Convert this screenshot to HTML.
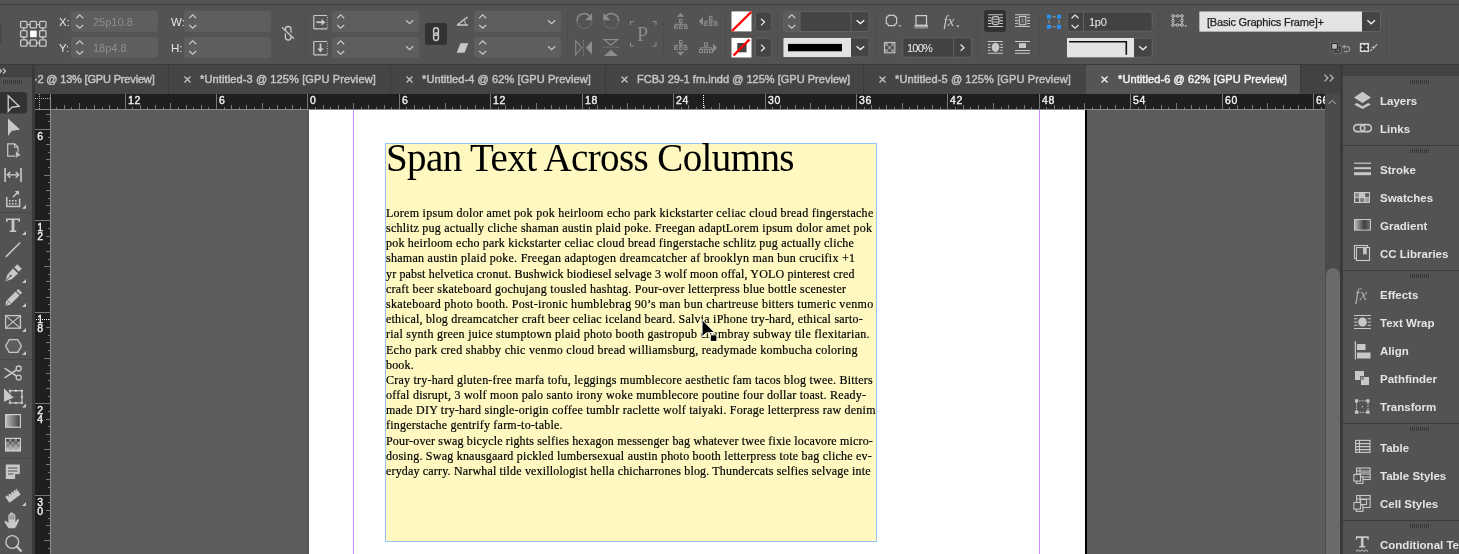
<!DOCTYPE html>
<html><head><meta charset="utf-8">
<style>
*{margin:0;padding:0;box-sizing:border-box}
html,body{width:1459px;height:554px;overflow:hidden;background:#535353;font-family:"Liberation Sans",sans-serif;position:relative}
.a{position:absolute}
div,svg{will-change:transform}
svg.a{overflow:visible}
.inp{position:absolute;background:#5e5e5e;border-radius:3px}
.lbl{position:absolute;color:#e4e4e4;font-size:11.5px;line-height:12px}
.val{position:absolute;color:#8e8e8e;font-size:11px;line-height:12px}
.tab{position:absolute;top:65px;height:29px;background:#454545;color:#c4c4c4;font-size:11px;line-height:12px;white-space:nowrap;overflow:hidden}
.tab .t{position:absolute;top:8.4px;-webkit-text-stroke:0.45px #c4c4c4}
.tab.act{background:#555555;color:#f4f4f4}
.tab.act .t{-webkit-text-stroke:0.3px #f4f4f4}
.tdiv{position:absolute;top:65px;width:1px;height:29px;background:#3b3b3b}
.ritem{position:absolute;left:1380px;color:#e4e4e4;font-size:11.5px;font-weight:bold;line-height:14px;white-space:nowrap}
.rsep{position:absolute;left:1343px;width:116px;height:1px;background:#3a3a3a}
.bl{position:absolute;left:386px;font-family:"Liberation Serif",serif;font-size:12px;line-height:15px;color:#000;white-space:nowrap;-webkit-text-stroke:0.2px #000}
#title{left:386px;top:136px;font-family:"Liberation Serif",serif;font-size:39px;line-height:44px;letter-spacing:-0.6px;color:#000;white-space:nowrap;-webkit-text-stroke:0.05px #000}
.guide{position:absolute;width:1px;background:#d08aff}
</style></head><body>
<!-- top strip -->
<div class="a" style="left:0;top:4px;width:1459px;height:1px;background:#3c3c3c"></div>

<!-- X/Y/W/H -->
<div class="lbl" style="left:59px;top:16px">X:</div>
<div class="lbl" style="left:59px;top:42px">Y:</div>
<div class="inp" style="left:71px;top:11px;width:87px;height:21px"></div>
<div class="inp" style="left:71px;top:37px;width:87px;height:21px"></div>
<div class="val" style="left:93px;top:16px">25p10.8</div>
<div class="val" style="left:93px;top:42px">18p4.8</div>
<div class="lbl" style="left:171px;top:16px">W:</div>
<div class="lbl" style="left:171px;top:42px">H:</div>
<div class="inp" style="left:184px;top:11px;width:87px;height:21px"></div>
<div class="inp" style="left:184px;top:37px;width:87px;height:21px"></div>
<svg class="a" style="left:0;top:0" width="1459" height="64" viewBox="0 0 1459 64">
<defs>
<linearGradient id="dsh" x1="0" x2="0" y1="0" y2="1"><stop offset="0" stop-color="#d0d0d0"/><stop offset="1" stop-color="#535353"/></linearGradient>
</defs>
<!-- left grip -->
<g fill="#3e3e3e"><rect x="0" y="25" width="2" height="1"/><rect x="0" y="27" width="2" height="1"/><rect x="0" y="29" width="2" height="1"/><rect x="0" y="31" width="2" height="1"/><rect x="0" y="33" width="2" height="1"/><rect x="0" y="35" width="2" height="1"/><rect x="0" y="37" width="2" height="1"/><rect x="0" y="39" width="2" height="1"/><rect x="0" y="41" width="2" height="1"/><rect x="0" y="43" width="2" height="1"/></g>
<!-- reference point -->
<g fill="none" stroke="#c8c8c8" stroke-width="1.3">
<rect x="20.6" y="21.4" width="6.4" height="6.4" rx="1"/><rect x="30.1" y="21.4" width="6.4" height="6.4" rx="1"/><rect x="39.6" y="21.4" width="6.4" height="6.4" rx="1"/>
<rect x="20.6" y="30.6" width="6.4" height="6.4" rx="1"/><rect x="39.6" y="30.6" width="6.4" height="6.4" rx="1"/>
<rect x="20.6" y="39.8" width="6.4" height="6.4" rx="1"/><rect x="30.1" y="39.8" width="6.4" height="6.4" rx="1"/><rect x="39.6" y="39.8" width="6.4" height="6.4" rx="1"/>
<path d="M27 24.6h3.1M36.5 24.6h3.1M27 43h3.1M36.5 43h3.1M23.8 27.8v2.8M42.8 27.8v2.8M23.8 37v2.8M42.8 37v2.8"/>
</g>
<rect x="30.1" y="30.6" width="6.6" height="6.6" fill="#ffffff"/>
<!-- spinners in X Y W H -->
<g fill="none" stroke="#c8c8c8" stroke-width="1.2">
<path d="M76.2 18.2l3.5-3.3l3.5 3.3M76.2 25l3.5 3.3l3.5-3.3"/>
<path d="M76.2 44.2l3.5-3.3l3.5 3.3M76.2 51l3.5 3.3l3.5-3.3"/>
<path d="M189.2 18.2l3.5-3.3l3.5 3.3M189.2 25l3.5 3.3l3.5-3.3"/>
<path d="M189.2 44.2l3.5-3.3l3.5 3.3M189.2 51l3.5 3.3l3.5-3.3"/>
</g>
<!-- broken link -->
<path d="M285.4 30.5v-1.2a2.8 2.8 0 0 1 5.6 0v3.5M285.4 33.5v3.8a2.8 2.8 0 0 0 5.6 0v-1.5" fill="none" stroke="#c8c8c8" stroke-width="1.3"/>
<path d="M282 27.3L294 38.7" stroke="#c8c8c8" stroke-width="1.3"/>
<!-- separators -->
<g stroke="#4b4b4b" stroke-width="1" stroke-dasharray="3 1">
<path d="M305.5 12v45M567.5 12v45M663.5 12v45M725.5 12v45M777.5 12v45M875.5 12v45M977.5 12v45M1039.5 12v45M1158.5 12v45M1386.5 12v45"/>
</g>
<!-- scale X icon -->
<path d="M313.8 15.5v13.3M313.8 15.5h13.4M313.8 28.8h13.4" stroke="#c8c8c8" stroke-width="1.2" fill="none"/>
<path d="M327.3 17v11.5" stroke="#c8c8c8" stroke-width="1" stroke-dasharray="1 1.5"/>
<path d="M316.5 22.2h6.5" stroke="#c8c8c8" stroke-width="1.8"/>
<path d="M321.5 19l4 3.2l-4 3.2z" fill="#c8c8c8"/>
<!-- scale Y icon -->
<path d="M313.8 41.5v13.3M313.8 41.5h13.4M313.8 54.8h13.4" stroke="#c8c8c8" stroke-width="1.2" fill="none"/>
<path d="M327.3 43v11.5" stroke="#c8c8c8" stroke-width="1" stroke-dasharray="1 1.5"/>
<path d="M320.5 43.5v6" stroke="#c8c8c8" stroke-width="1.8"/>
<path d="M317.3 48.5l3.2 4l3.2-4z" fill="#c8c8c8"/>
<!-- scale inputs -->
<rect x="332" y="11" width="87" height="21" rx="3" fill="#5e5e5e"/>
<rect x="332" y="37" width="87" height="21" rx="3" fill="#5e5e5e"/>
<g fill="none" stroke="#c8c8c8" stroke-width="1.2">
<path d="M337.2 18.2l3.5-3.3l3.5 3.3M337.2 25l3.5 3.3l3.5-3.3"/>
<path d="M337.2 44.2l3.5-3.3l3.5 3.3M337.2 51l3.5 3.3l3.5-3.3"/>
<path d="M406 20.3l3.6 3.3l3.6-3.3M406 46.3l3.6 3.3l3.6-3.3"/>
</g>
<!-- constrain link button -->
<rect x="425" y="23" width="22" height="21.7" rx="2" fill="#323232"/>
<rect x="433.6" y="27.8" width="4.8" height="7.4" rx="2.4" fill="none" stroke="#c8c8c8" stroke-width="1.5"/><rect x="433.6" y="32.8" width="4.8" height="7.6" rx="2.4" fill="none" stroke="#c8c8c8" stroke-width="1.5"/><path d="M434 33.5L436.5 31" stroke="#323232" stroke-width="0.8"/>
<!-- angle icon -->
<path d="M457 25h11M457.2 25L467.5 17" stroke="#c8c8c8" stroke-width="1.5" fill="none"/>
<path d="M463.7 20a5.5 5.5 0 0 1 1.7 4.5" stroke="#c8c8c8" stroke-width="1" fill="none"/>
<!-- shear icon -->
<path d="M460.5 43.2h7.8l-3.8 9.5h-7.8z" fill="#c8c8c8"/>
<!-- angle inputs -->
<rect x="474" y="11" width="87" height="21" rx="3" fill="#5e5e5e"/>
<rect x="474" y="37" width="87" height="21" rx="3" fill="#5e5e5e"/>
<g fill="none" stroke="#c8c8c8" stroke-width="1.2">
<path d="M479.2 18.2l3.5-3.3l3.5 3.3M479.2 25l3.5 3.3l3.5-3.3"/>
<path d="M479.2 44.2l3.5-3.3l3.5 3.3M479.2 51l3.5 3.3l3.5-3.3"/>
<path d="M548 20.3l3.6 3.3l3.6-3.3M548 46.3l3.6 3.3l3.6-3.3"/>
</g>
<!-- rotate icons (disabled) -->
<g fill="none" stroke="#8c8c8c" stroke-width="1.5">
<path d="M577 21a7.3 7.3 0 0 1 13-4.6"/>
<path d="M618.6 21a7.3 7.3 0 0 0 -13-4.6"/>
</g>
<g fill="none" stroke="#8c8c8c" stroke-width="1.1" stroke-dasharray="1 1.4">
<path d="M577 21a7.3 7.3 0 0 0 14.6 0"/>
<path d="M604 21a7.3 7.3 0 0 0 14.6 0"/>
</g>
<path d="M592.2 13v7.3h-7z" fill="#8c8c8c"/>
<path d="M603.4 13v7.3h7z" fill="#8c8c8c"/>
<!-- flip icons -->
<path d="M575.7 41v13.5l6-6.75z" fill="none" stroke="#8c8c8c" stroke-width="1.1"/>
<path d="M592 41v13.5l-6.3-6.75z" fill="#8c8c8c"/>
<path d="M583.5 40v16" stroke="#8c8c8c" stroke-width="1" stroke-dasharray="1 1.2"/>
<path d="M604.2 39.6h13.5l-6.75 5.6z" fill="none" stroke="#8c8c8c" stroke-width="1.1"/>
<path d="M604 56h14l-7-6.3z" fill="#8c8c8c"/>
<path d="M603 47.2h16" stroke="#8c8c8c" stroke-width="1" stroke-dasharray="1 1.2"/>
<!-- P icon -->
<path d="M630.5 25v-3.5h3.5M652.5 21.5h3.5v3.5M630.5 42.5v3.5h3.5M656 42.5v3.5h-3.5" fill="none" stroke="#8c8c8c" stroke-width="1.2"/>
<text x="637" y="41" font-family="Liberation Serif" font-size="20" fill="#8c8c8c">P</text>
<!-- select container/content/prev/next (disabled) -->
<g fill="#8c8c8c">
<path d="M677 16.8l3.6-4l3.6 4z"/>
<path d="M677 51.8l3.6 4l3.6-4z"/>
<path d="M703 17l-4.2 4.2l4.2 4.2z"/>
<path d="M713 43.5l4.2 4.3l-4.2 4.3z"/>
</g>
<g fill="none" stroke="#8c8c8c" stroke-width="1">
<rect x="679.5" y="19.5" width="2.4" height="3"/><path d="M680.7 22.5v1.8M675 26v-1.7h11.4v1.7M680.7 24.3v1.7"/><rect x="674.5" y="26" width="2.5" height="2.6"/><rect x="679.5" y="26" width="2.5" height="2.6"/><rect x="684.5" y="26" width="2.5" height="2.6"/>
<rect x="679.5" y="40.5" width="2.4" height="3"/><path d="M680.7 43.5v1.8M675 47v-1.7h11.4v1.7M680.7 45.3v1.7"/><rect x="674.5" y="47" width="2.5" height="2.6"/><rect x="679.5" y="47" width="2.5" height="2.6"/><rect x="684.5" y="47" width="2.5" height="2.6"/>
<rect x="709.5" y="16.3" width="2.4" height="3"/><path d="M710.7 19.3v1.8M705 22.8v-1.7h11.4v1.7M710.7 21.1v1.7"/><rect x="704.5" y="22.8" width="2.5" height="2.6"/><rect x="709.5" y="22.8" width="2.5" height="2.6"/><rect x="714.5" y="22.8" width="2.5" height="2.6"/>
<rect x="704.5" y="43" width="3" height="3"/><path d="M706 46v1.8M700.5 49.5v-1.7h11.5v1.7"/><rect x="699.5" y="49.5" width="3" height="3"/><rect x="704.5" y="49.5" width="3" height="3"/><rect x="709.5" y="49.5" width="3" height="3"/>
</g>
<!-- fill swatch -->
<rect x="731.5" y="11.4" width="20" height="20" fill="#ffffff"/>
<path d="M732 31L751.2 12" stroke="#ff0000" stroke-width="2.4"/>
<!-- stroke swatch -->
<rect x="731.5" y="37.9" width="20" height="19.6" fill="#ffffff"/>
<rect x="737.3" y="43" width="9.2" height="9.3" fill="#444"/>
<path d="M733.5 55.5L749.5 39.5" stroke="#ff0000" stroke-width="2.4"/>
<!-- > buttons -->
<rect x="755.5" y="11.8" width="15.8" height="19.4" rx="2.5" fill="#444444" stroke="#5f5f5f" stroke-width="1"/>
<rect x="755.5" y="38.2" width="15.8" height="19" rx="2.5" fill="#444444" stroke="#5f5f5f" stroke-width="1"/>
<path d="M761 18.8l3.5 3.3l-3.5 3.3M761 44.6l3.5 3.3l-3.5 3.3" fill="none" stroke="#e6e6e6" stroke-width="1.3"/>
<!-- stroke weight -->
<rect x="783.5" y="11.5" width="85.5" height="20" rx="2.5" fill="#444444" stroke="#626262" stroke-width="1"/>
<path d="M786 11.5h14v20h-14a2.5 2.5 0 0 1 -2.5-2.5v-15a2.5 2.5 0 0 1 2.5-2.5z" fill="#5c5c5c"/>
<path d="M800 11.5v20M851 11.5v20" stroke="#626262" stroke-width="1"/>
<path d="M788.3 18l3.5-3.3l3.5 3.3M788.3 25l3.5 3.3l3.5-3.3" fill="none" stroke="#c8c8c8" stroke-width="1.2"/>
<path d="M856.6 20.2l3.8 3.4l3.8-3.4" fill="none" stroke="#eeeeee" stroke-width="1.4"/>
<!-- stroke type -->
<rect x="783.5" y="38" width="85.5" height="19" rx="2.5" fill="#444444" stroke="#626262" stroke-width="1"/>
<rect x="783.5" y="38" width="67.5" height="19" fill="#e3e3e3"/>
<rect x="788" y="43.9" width="54" height="7.4" fill="#000000"/>
<path d="M856.6 46.2l3.8 3.4l3.8-3.4" fill="none" stroke="#eeeeee" stroke-width="1.4"/>
<!-- corner options -->
<path d="M886.3 17.3a2 2 0 0 0 2-2h6.3a2 2 0 0 0 2 2v6.3a2 2 0 0 0 -2 2h-6.3a2 2 0 0 0 -2-2z" fill="none" stroke="#c8c8c8" stroke-width="1.2"/>
<path d="M886.3 18.5a3.2 3.2 0 0 0 3.2-3.2M893.4 15.3a3.2 3.2 0 0 0 3.2 3.2M896.6 22.4a3.2 3.2 0 0 0 -3.2 3.2M889.5 25.6a3.2 3.2 0 0 0 -3.2-3.2" fill="none" stroke="#535353" stroke-width="0"/>
<path d="M898.3 25.2h3l-1.5 1.8z" fill="#c8c8c8"/>
<!-- drop shadow -->
<rect x="914.5" y="25" width="13.5" height="4.5" fill="url(#dsh)"/>
<rect x="916" y="15.6" width="10.5" height="9.6" fill="#535353" stroke="#d0d0d0" stroke-width="1.2"/>
<!-- fx -->
<text x="943.5" y="26" font-family="Liberation Serif" font-style="italic" font-size="15" fill="#c8c8c8">fx</text>
<path d="M956.3 25.6h3l-1.5 1.8z" fill="#c8c8c8"/>
<!-- opacity icon -->
<rect x="884.5" y="42.5" width="10.3" height="10.3" fill="#535353" stroke="#c8c8c8" stroke-width="1.1"/>
<g fill="#8e8e8e"><rect x="885" y="43" width="3.1" height="3.1"/><rect x="891.2" y="43" width="3.1" height="3.1"/><rect x="888.1" y="46.1" width="3.1" height="3.1"/><rect x="885" y="49.2" width="3.1" height="3.1"/><rect x="891.2" y="49.2" width="3.1" height="3.1"/></g>
<!-- opacity input -->
<rect x="902.8" y="37.8" width="68.5" height="19.4" rx="2.5" fill="#424242" stroke="#626262" stroke-width="1"/>
<path d="M953.7 37.8v19.4" stroke="#626262" stroke-width="1"/>
<path d="M960.6 44.5l3.4 3.2l-3.4 3.2" fill="none" stroke="#e6e6e6" stroke-width="1.3"/>
<!-- text wrap -->
<rect x="984" y="10" width="22" height="22" rx="3" fill="#323232"/>
<g stroke="#c8c8c8" stroke-width="1.1" fill="none">
<path d="M988 14.7h14.8M988 26.5h14.8M988 17.7h3.2M999.6 17.7h3.2M988 20.6h3.2M999.6 20.6h3.2M988 23.5h3.2M999.6 23.5h3.2"/>
<rect x="992" y="16.6" width="7" height="8" rx="2.5"/>
<path d="M992.3 19.3h6.4M992.3 22h6.4"/>
<path d="M1015 14.7h15M1015 26.5h15M1015 17.7h2.8M1027.2 17.7h2.8M1015 20.6h2.8M1027.2 20.6h2.8M1015 23.5h2.8M1027.2 23.5h2.8"/>
<rect x="1019.3" y="16.5" width="6.5" height="8.2"/>
<path d="M988 41.5h14.8M988 53.3h14.8M988 44.5h2.5M1000.3 44.5h2.5M988 47.4h2.5M1000.3 47.4h2.5M988 50.3h2.5M1000.3 50.3h2.5"/>
<path d="M1015 41.5h15M1015 50.5h15M1015 53.3h15"/>
</g>
<rect x="1021.8" y="18.5" width="1.6" height="4.2" fill="#8c8c8c"/>
<ellipse cx="995.5" cy="47.3" rx="3.8" ry="4.6" fill="#c8c8c8"/>
<rect x="1019" y="43.2" width="7" height="4.8" fill="#c8c8c8"/>
<!-- frame fitting -->
<g fill="#2b8ef0"><rect x="1047" y="14.8" width="4" height="4"/><rect x="1057" y="14.8" width="4" height="4"/><rect x="1047" y="24.8" width="4" height="4"/><rect x="1057" y="24.8" width="4" height="4"/></g>
<g fill="#9a9a9a"><rect x="1052.2" y="16.3" width="3.6" height="1"/><rect x="1052.2" y="26.3" width="3.6" height="1"/><rect x="1048.5" y="20" width="1" height="3.6"/><rect x="1058.5" y="20" width="1" height="3.6"/></g>
<rect x="1067.2" y="11.9" width="85" height="19.3" rx="2.5" fill="#424242" stroke="#626262" stroke-width="1"/>
<path d="M1083.5 11.9v19.3" stroke="#626262" stroke-width="1"/>
<path d="M1071.6 18.3l3.5-3.3l3.5 3.3M1071.6 25l3.5 3.3l3.5-3.3" fill="none" stroke="#e6e6e6" stroke-width="1.2"/>
<!-- stroke corner -->
<rect x="1067.2" y="38.2" width="85" height="19" rx="2.5" fill="#444444" stroke="#626262" stroke-width="1"/>
<rect x="1067" y="38" width="67" height="19.3" fill="#e3e3e3"/>
<path d="M1069 41.8h57.3v13" fill="none" stroke="#111" stroke-width="1.6"/>
<path d="M1139.2 46.3l3.8 3.4l3.8-3.4" fill="none" stroke="#eeeeee" stroke-width="1.4"/>
<!-- object style icon -->
<path d="M1174.6 16h6.8M1174.6 25h6.8M1173 17.6v6.8M1182 17.6v6.8" stroke="#c8c8c8" stroke-width="1" fill="none"/>
<g fill="#535353" stroke="#c8c8c8" stroke-width="1"><circle cx="1173" cy="16" r="1.3"/><circle cx="1177.5" cy="16" r="1.3"/><circle cx="1182" cy="16" r="1.3"/><circle cx="1173" cy="20.5" r="1.3"/><circle cx="1182" cy="20.5" r="1.3"/><circle cx="1173" cy="25" r="1.3"/><circle cx="1177.5" cy="25" r="1.3"/><circle cx="1182" cy="25" r="1.3"/></g>
<path d="M1184.3 25.6h2.8l-1.4 1.7z" fill="#c8c8c8"/>
<!-- object style dropdown -->
<rect x="1199.5" y="11.5" width="181" height="20" rx="2.5" fill="#444444" stroke="#626262" stroke-width="1"/>
<rect x="1199.4" y="11.5" width="162.6" height="20.1" fill="#e3e3e3"/>
<path d="M1367.4 20.3l3.8 3.4l3.8-3.4" fill="none" stroke="#eeeeee" stroke-width="1.4"/>
<!-- clear overrides icon -->
<rect x="1333.6" y="45.6" width="7.6" height="7.6" fill="none" stroke="#6a6a6a" stroke-width="1"/>
<rect x="1334.5" y="46.5" width="5.8" height="5.8" fill="#2e2e2e"/>
<rect x="1330.8" y="42.7" width="7.4" height="7.4" fill="none" stroke="#6a6a6a" stroke-width="1"/>
<rect x="1331.6" y="43.5" width="5.8" height="5.8" fill="#b8b8b8" stroke="#2a2a2a" stroke-width="1.1"/>
<path d="M1336.8 50.9h2v-2.2" fill="none" stroke="#8a8a8a" stroke-width="0.9"/>
<path d="M1342.6 46.6h4.6a2.5 2.5 0 0 1 0 5h-3.2" fill="none" stroke="#9a9a9a" stroke-width="1.1"/>
<path d="M1345 44.2l-2.8 2.4l2.8 2.4z" fill="#9a9a9a"/>
<!-- break link to style -->
<rect x="1359.8" y="42.9" width="9.2" height="9.1" fill="#d8d8d8"/>
<g fill="#3a3a3a"><circle cx="1362.6" cy="45.7" r="1.5"/><circle cx="1366.2" cy="45.7" r="1.5"/><circle cx="1362.6" cy="49.2" r="1.5"/><circle cx="1366.2" cy="49.2" r="1.5"/><rect x="1362.4" y="45.5" width="4" height="3.9"/></g>
<path d="M1370.2 51.2l2-2M1374.8 46.6l2.4-2.4" stroke="#c8c8c8" stroke-width="1.1"/>
<path d="M1373.5 45.2l0.5 1.8l1.8 0.5l-1.8 0.5l-0.5 1.8l-0.5-1.8l-1.8-0.5l1.8-0.5z" fill="#d0d0d0"/>
</svg>
<div class="a" style="left:906.5px;top:42px;color:#f0f0f0;font-size:11px;line-height:12px;letter-spacing:-0.8px">100%</div>
<div class="a" style="left:1088.5px;top:16px;color:#f0f0f0;font-size:11px;line-height:12px;letter-spacing:-0.3px">1p0</div>
<div class="a" style="left:1207px;top:16px;color:#1e1e1e;font-size:11px;line-height:12px;white-space:nowrap;letter-spacing:-0.2px;-webkit-text-stroke:0.25px #1e1e1e">[Basic Graphics Frame]+</div>


<!-- left tools panel -->
<div class="a" style="left:0;top:65px;width:32px;height:11px;background:#434343"></div>
<div class="a" style="left:32px;top:64px;width:3px;height:490px;background:#3a3a3a"></div>
<svg class="a" style="left:0;top:0" width="32" height="554" viewBox="0 0 32 554">
<!-- header chevrons -->
<path d="M-1 68.5l2.5 2.5-2.5 2.5M3 68.5l2.5 2.5-2.5 2.5" stroke="#c8c8c8" stroke-width="1.2" fill="none"/>
<rect x="0" y="76" width="32" height="1" fill="#3e3e3e"/>
<g fill="#383838">
<rect x="3" y="80" width="1" height="4"/><rect x="5" y="80" width="1" height="4"/><rect x="7" y="80" width="1" height="4"/><rect x="9" y="80" width="1" height="4"/><rect x="11" y="80" width="1" height="4"/><rect x="13" y="80" width="1" height="4"/><rect x="15" y="80" width="1" height="4"/><rect x="17" y="80" width="1" height="4"/><rect x="19" y="80" width="1" height="4"/><rect x="21" y="80" width="1" height="4"/>
</g>
<!-- active selection bg -->
<path d="M0 92h24a3 3 0 0 1 3 3v15.5a3 3 0 0 1 -3 3H0z" fill="#323232"/>
<!-- selection tool -->
<path d="M8.2 95.8L19.2 106.2L11.6 107.4L8.2 111.4Z" fill="none" stroke="#d2d2d2" stroke-width="1.3" stroke-linejoin="miter"/>
<!-- direct selection -->
<path d="M8 118.5L20 129.6L11.6 131L8 136Z" fill="#c8c8c8"/>
<!-- page tool -->
<path d="M7.7 143.8h7l3.3 3.3v9h-10.3z" fill="none" stroke="#c8c8c8" stroke-width="1.2"/>
<path d="M14.5 143.8v3.5h3.5" fill="none" stroke="#c8c8c8" stroke-width="1.1"/>
<path d="M15.5 150.5L21.5 155.5L18.3 156.2L15.8 158.5Z" fill="#c8c8c8" stroke="#535353" stroke-width="0.8"/>
<!-- gap tool -->
<rect x="4.3" y="168" width="1.6" height="14" fill="#c8c8c8"/><rect x="20.2" y="168" width="1.6" height="14" fill="#c8c8c8"/>
<path d="M7.5 174.8h11" stroke="#c8c8c8" stroke-width="1.4"/>
<path d="M10.3 171.8L7.3 174.8L10.3 177.8M15.7 171.8L18.7 174.8L15.7 177.8" fill="none" stroke="#c8c8c8" stroke-width="1.4"/>
<!-- content collector -->
<path d="M6.8 197v9.6h12.8v-8" fill="none" stroke="#c8c8c8" stroke-width="1.5"/>
<g fill="#c8c8c8"><rect x="9" y="200" width="1.6" height="1.6"/><rect x="12" y="200" width="1.6" height="1.6"/><rect x="15" y="200" width="1.6" height="1.6"/><rect x="9" y="203" width="1.6" height="1.6"/><rect x="12" y="203" width="1.6" height="1.6"/><rect x="15" y="203" width="1.6" height="1.6"/></g>
<path d="M13 197L18.3 191.8" stroke="#c8c8c8" stroke-width="1.5"/>
<path d="M14.8 191h4.2v4.2z" fill="#c8c8c8"/>
<path d="M22 208.7h4v-4z" fill="#c8c8c8"/>
<rect x="0" y="212" width="32" height="1" fill="#484848"/>
<!-- type tool -->
<path d="M6 218.4h14v3.4h-1.6v-1.7h-4v10.3h1.8v1.6h-6.4v-1.6h1.8v-10.3h-4v1.7h-1.6z" fill="#c8c8c8"/>
<path d="M22 235h4v-4z" fill="#c8c8c8"/>
<!-- line tool -->
<path d="M5.8 256.9L20.2 242.5" stroke="#c8c8c8" stroke-width="1.5"/>
<!-- pen -->
<path d="M5.2 281.5L7.5 274.5L13 268.5L18 273.5L12 279z" fill="#c8c8c8"/>
<path d="M14.3 267.3L17.3 264.3L21.7 268.7L18.7 271.7z" fill="#c8c8c8"/>
<path d="M5.8 280.8L10 276.5" stroke="#535353" stroke-width="1"/>
<circle cx="10.6" cy="275.9" r="1.1" fill="#535353"/>
<path d="M22 283h4v-4z" fill="#c8c8c8"/>
<!-- pencil -->
<path d="M5 306L6.3 300.8L15.6 291.5L19.5 295.4L10.2 304.7z" fill="#c8c8c8"/>
<path d="M16.4 290.7L18.2 288.9L22.1 292.8L20.3 294.6z" fill="#c8c8c8"/>
<path d="M5.3 305.7L7.5 303.5" stroke="#535353" stroke-width="1"/>
<path d="M7.5 300.3L10.7 303.5" stroke="#535353" stroke-width="0.9"/>
<path d="M22 307h4v-4z" fill="#c8c8c8"/>
<!-- rectangle frame -->
<rect x="5.6" y="315.6" width="14.8" height="12.6" fill="none" stroke="#c8c8c8" stroke-width="1.3"/>
<path d="M5.6 315.6L20.4 328.2M20.4 315.6L5.6 328.2" stroke="#c8c8c8" stroke-width="1.1"/>
<path d="M22 332h4v-4z" fill="#c8c8c8"/>
<!-- polygon -->
<path d="M5.6 346L9.2 339.6h8.6L21.4 346L17.8 352.4h-8.6z" fill="#5e5e5e" stroke="#c8c8c8" stroke-width="1.3"/>
<path d="M22 355h4v-4z" fill="#c8c8c8"/>
<rect x="0" y="359" width="32" height="1" fill="#484848"/>
<!-- scissors -->
<circle cx="18.7" cy="368.5" r="2.5" fill="none" stroke="#c8c8c8" stroke-width="1.3"/>
<circle cx="18.7" cy="377.6" r="2.5" fill="none" stroke="#c8c8c8" stroke-width="1.3"/>
<path d="M4.5 368.2L16.5 376M4.5 377.8L16.5 370" stroke="#c8c8c8" stroke-width="1.5"/>
<!-- free transform -->
<rect x="9.9" y="390.7" width="12" height="12.2" fill="none" stroke="#c8c8c8" stroke-width="1.2"/>
<g fill="#c8c8c8"><circle cx="9.9" cy="390.7" r="1.2"/><circle cx="15.9" cy="390.7" r="1.2"/><circle cx="21.9" cy="390.7" r="1.2"/><circle cx="21.9" cy="396.8" r="1.2"/><circle cx="9.9" cy="402.9" r="1.2"/><circle cx="15.9" cy="402.9" r="1.2"/><circle cx="21.9" cy="402.9" r="1.2"/></g>
<path d="M3.5 387.3L14.3 397.8L3.5 402.5z" fill="#c8c8c8" stroke="#535353" stroke-width="1"/>
<path d="M22 407.5h4v-4z" fill="#c8c8c8"/>
<!-- gradient swatch -->
<defs>
<linearGradient id="tg1" x1="0" x2="1" y1="0" y2="0"><stop offset="0" stop-color="#bdbdbd"/><stop offset="1" stop-color="#404040"/></linearGradient>
<linearGradient id="tg2" x1="0" x2="0" y1="0" y2="1"><stop offset="0" stop-color="#3c3c3c"/><stop offset="1" stop-color="#c0c0c0"/></linearGradient>
</defs>
<rect x="5.6" y="414.6" width="14.8" height="12.6" fill="url(#tg1)" stroke="#cfcfcf" stroke-width="1.2"/>
<!-- gradient feather -->
<linearGradient id="tg3" x1="0" x2="0" y1="0" y2="1"><stop offset="0" stop-color="#7a7a7a"/><stop offset="1" stop-color="#c4c4c4"/></linearGradient>
<rect x="5.6" y="438.4" width="14.8" height="12.6" fill="url(#tg3)" stroke="#cfcfcf" stroke-width="1.2"/>
<rect x="6.20" y="439.00" width="2.72" height="2.72" fill="#333" opacity="0.75"/><rect x="11.64" y="439.00" width="2.72" height="2.72" fill="#333" opacity="0.75"/><rect x="17.08" y="439.00" width="2.72" height="2.72" fill="#333" opacity="0.75"/><rect x="8.92" y="441.72" width="2.72" height="2.72" fill="#333" opacity="0.5"/><rect x="14.36" y="441.72" width="2.72" height="2.72" fill="#333" opacity="0.5"/><rect x="6.20" y="444.44" width="2.72" height="2.72" fill="#333" opacity="0.3"/><rect x="11.64" y="444.44" width="2.72" height="2.72" fill="#333" opacity="0.3"/><rect x="17.08" y="444.44" width="2.72" height="2.72" fill="#333" opacity="0.3"/><rect x="8.92" y="447.16" width="2.72" height="2.72" fill="#333" opacity="0.12"/><rect x="14.36" y="447.16" width="2.72" height="2.72" fill="#333" opacity="0.12"/>
<rect x="0" y="458" width="32" height="1" fill="#484848"/>
<!-- note tool -->
<path d="M5.8 464.5h14v10l-4.5 4.5h-9.5z" fill="#c8c8c8"/>
<path d="M8 468h9.5M8 471h9.5M8 474h5.5" stroke="#535353" stroke-width="1.2"/>
<path d="M15.5 479.2v-4.6h4.6" fill="#535353" stroke="#535353" stroke-width="0.8"/>
<!-- measure tool -->
<path d="M5.3 497L16.5 488.8L20.7 494.5L9.5 502.7z" fill="#c8c8c8"/>
<path d="M8.8 496.5l-1.2-1.8M11.3 494.7l-1.7-2.4M13.8 492.9l-1.2-1.8M16.3 491.1l-1.7-2.4" stroke="#535353" stroke-width="1"/>
<path d="M22 506h4v-4z" fill="#c8c8c8"/>
<!-- hand -->
<path d="M8.8 528.3C7.3 526.6 5.6 523.8 4.8 522.2C4.3 521.2 5.2 520.3 6.1 520.9L8.4 523V515C8.4 513.9 10.1 513.9 10.1 515V520.6V513.1C10.1 512 11.9 512 11.9 513.1V520.6V513.6C11.9 512.5 13.7 512.5 13.7 513.6V520.6V515.2C13.7 514.1 15.4 514.1 15.4 515.2V522.2L17.3 519.6C18 518.7 19.4 519.3 18.9 520.4L16.8 525.2C16 527.2 15 528.3 13.2 528.3z" fill="#c8c8c8"/>
<path d="M10.1 519.5v-4M11.9 519.5v-5M13.7 519.5v-4" stroke="#535353" stroke-width="0.6"/>
<!-- zoom -->
<circle cx="12.3" cy="542" r="6.4" fill="none" stroke="#c8c8c8" stroke-width="1.4"/>
<path d="M16.8 546.6L20.8 550.8" stroke="#c8c8c8" stroke-width="2.2" stroke-linecap="square"/>
</svg>


<!-- tabs -->
<div class="a" style="left:35px;top:64px;width:1305px;height:30px;background:#424242"></div>
<div class="a" style="left:0;top:64px;width:1459px;height:1px;background:#3a3a3a"></div>
<div class="tdiv" style="left:1300px"></div>
<div class="tab" style="left:35px;width:133px"><span class="t" style="left:-1px;letter-spacing:-0.17px">·2 @ 13% [GPU Preview]</span></div>
<div class="tab" style="left:169px;width:221px"></div>
<div class="tab" style="left:391px;width:215px"></div>
<div class="tab" style="left:606px;width:257px"></div>
<div class="tab" style="left:864px;width:222px"></div>
<div class="tab act" style="left:1086px;width:214px"></div>
<div class="a" style="left:200.1px;top:73.4px;font-size:11px;line-height:12px;white-space:nowrap;color:#c4c4c4;-webkit-text-stroke:0.45px #c4c4c4;letter-spacing:0.123px">*Untitled-3 @ 125% [GPU Preview]</div>
<svg class="a" style="left:183.5px;top:76px" width="7" height="7"><path d="M0.5 0.5L6.5 6.5M6.5 0.5L0.5 6.5" stroke="#c4c4c4" stroke-width="1.3"/></svg>
<div class="a" style="left:422.4px;top:73.4px;font-size:11px;line-height:12px;white-space:nowrap;color:#c4c4c4;-webkit-text-stroke:0.45px #c4c4c4;letter-spacing:0.099px">*Untitled-4 @ 62% [GPU Preview]</div>
<svg class="a" style="left:405.5px;top:76px" width="7" height="7"><path d="M0.5 0.5L6.5 6.5M6.5 0.5L0.5 6.5" stroke="#c4c4c4" stroke-width="1.3"/></svg>
<div class="a" style="left:637.4px;top:73.4px;font-size:11px;line-height:12px;white-space:nowrap;color:#c4c4c4;-webkit-text-stroke:0.45px #c4c4c4;letter-spacing:0.021px">FCBJ 29-1 fm.indd @ 125% [GPU Preview]</div>
<svg class="a" style="left:620.7px;top:76px" width="7" height="7"><path d="M0.5 0.5L6.5 6.5M6.5 0.5L0.5 6.5" stroke="#c4c4c4" stroke-width="1.3"/></svg>
<div class="a" style="left:895.4px;top:73.4px;font-size:11px;line-height:12px;white-space:nowrap;color:#c4c4c4;-webkit-text-stroke:0.45px #c4c4c4;letter-spacing:0.123px">*Untitled-5 @ 125% [GPU Preview]</div>
<svg class="a" style="left:878.9px;top:76px" width="7" height="7"><path d="M0.5 0.5L6.5 6.5M6.5 0.5L0.5 6.5" stroke="#c4c4c4" stroke-width="1.3"/></svg>
<div class="a" style="left:1117.5px;top:73.4px;font-size:11px;line-height:12px;white-space:nowrap;color:#f4f4f4;-webkit-text-stroke:0.45px #f4f4f4;letter-spacing:0.099px">*Untitled-6 @ 62% [GPU Preview]</div>
<svg class="a" style="left:1100.6px;top:76px" width="7" height="7"><path d="M0.5 0.5L6.5 6.5M6.5 0.5L0.5 6.5" stroke="#f4f4f4" stroke-width="1.3"/></svg>
<div class="tdiv" style="left:168px"></div>
<div class="tdiv" style="left:390px"></div>
<div class="tdiv" style="left:605px"></div>
<div class="tdiv" style="left:863px"></div>

<!-- pasteboard / page -->
<div class="a" style="left:51px;top:110px;width:1274px;height:444px;background:#5c5c5c"></div>
<div class="a" style="left:306px;top:110px;width:3px;height:444px;background:#575757"></div>
<div class="a" style="left:309px;top:110px;width:776px;height:444px;background:#ffffff"></div>
<div class="a" style="left:1085px;top:110px;width:2px;height:444px;background:#000"></div>
<div class="guide" style="left:353px;top:110px;height:444px"></div>
<div class="guide" style="left:1039px;top:110px;height:444px"></div>
<div class="a" style="left:385px;top:143px;width:492px;height:399px;background:#fff9c1;border:1px solid #92c6f6"></div>
<div class="a" id="title">Span Text Across Columns</div>
<div class="bl" style="top:205.8px;letter-spacing:0.265px">Lorem ipsum dolor amet pok pok heirloom echo park kickstarter celiac cloud bread fingerstache</div>
<div class="bl" style="top:221.0px;letter-spacing:0.248px">schlitz pug actually cliche shaman austin plaid poke. Freegan adaptLorem ipsum dolor amet pok</div>
<div class="bl" style="top:236.2px;letter-spacing:0.215px">pok heirloom echo park kickstarter celiac cloud bread fingerstache schlitz pug actually cliche</div>
<div class="bl" style="top:251.4px;letter-spacing:0.269px">shaman austin plaid poke. Freegan adaptogen dreamcatcher af brooklyn man bun crucifix +1</div>
<div class="bl" style="top:266.6px;letter-spacing:0.156px">yr pabst helvetica cronut. Bushwick biodiesel selvage 3 wolf moon offal, YOLO pinterest cred</div>
<div class="bl" style="top:281.8px;letter-spacing:0.242px">craft beer skateboard gochujang tousled hashtag. Pour-over letterpress blue bottle scenester</div>
<div class="bl" style="top:296.9px;letter-spacing:0.300px">skateboard photo booth. Post-ironic humblebrag 90’s man bun chartreuse bitters tumeric venmo</div>
<div class="bl" style="top:312.1px;letter-spacing:0.213px">ethical, blog dreamcatcher craft beer celiac iceland beard. Salvia iPhone try-hard, ethical sarto-</div>
<div class="bl" style="top:327.3px;letter-spacing:0.265px">rial synth green juice stumptown plaid photo booth gastropub chambray subway tile flexitarian.</div>
<div class="bl" style="top:342.5px;letter-spacing:0.273px">Echo park cred shabby chic venmo cloud bread williamsburg, readymade kombucha coloring</div>
<div class="bl" style="top:357.7px;letter-spacing:0.180px">book.</div>
<div class="bl" style="top:372.8px;letter-spacing:0.220px">Cray try-hard gluten-free marfa tofu, leggings mumblecore aesthetic fam tacos blog twee. Bitters</div>
<div class="bl" style="top:388.0px;letter-spacing:0.242px">offal disrupt, 3 wolf moon palo santo irony woke mumblecore poutine four dollar toast. Ready-</div>
<div class="bl" style="top:403.2px;letter-spacing:0.222px">made DIY try-hard single-origin coffee tumblr raclette wolf taiyaki. Forage letterpress raw denim</div>
<div class="bl" style="top:418.4px;letter-spacing:0.216px">fingerstache gentrify farm-to-table.</div>
<div class="bl" style="top:433.6px;letter-spacing:0.162px">Pour-over swag bicycle rights selfies hexagon messenger bag whatever twee fixie locavore micro-</div>
<div class="bl" style="top:448.7px;letter-spacing:0.230px">dosing. Swag knausgaard pickled lumbersexual austin photo booth letterpress tote bag cliche ev-</div>
<div class="bl" style="top:463.9px;letter-spacing:0.171px">eryday carry. Narwhal tilde vexillologist hella chicharrones blog. Thundercats selfies selvage inte</div>
<svg class="a" style="left:695px;top:315px" width="30" height="30" viewBox="695 315 30 30">
<path d="M702 319.5L714.5 332.3L706.2 333L702 337z" fill="#000" stroke="#fff" stroke-width="1"/>
<rect x="710" y="334.5" width="7.2" height="7.2" fill="#fff"/>
<rect x="710.8" y="335.3" width="5.6" height="5.6" fill="#000"/>
</svg>

<svg class="a" style="left:35px;top:94px;will-change:transform" width="1290" height="16"><rect x="0" y="0" width="1290" height="16" fill="#1f1f1f"/><rect x="0" y="15" width="1290" height="1" fill="#8a8a8a"/><rect x="15" y="0" width="1" height="16" fill="#8a8a8a"/><rect x="4" y="0" width="1" height="1" fill="#b0b0b0"/><rect x="4" y="2" width="1" height="1" fill="#b0b0b0"/><rect x="4" y="4" width="1" height="1" fill="#b0b0b0"/><rect x="4" y="6" width="1" height="1" fill="#b0b0b0"/><rect x="4" y="8" width="1" height="1" fill="#b0b0b0"/><rect x="4" y="10" width="1" height="1" fill="#b0b0b0"/><rect x="4" y="12" width="1" height="1" fill="#b0b0b0"/><rect x="4" y="14" width="1" height="1" fill="#b0b0b0"/><rect x="0" y="4" width="1" height="1" fill="#b0b0b0"/><rect x="2" y="4" width="1" height="1" fill="#b0b0b0"/><rect x="4" y="4" width="1" height="1" fill="#b0b0b0"/><rect x="6" y="4" width="1" height="1" fill="#b0b0b0"/><rect x="8" y="4" width="1" height="1" fill="#b0b0b0"/><rect x="10" y="4" width="1" height="1" fill="#b0b0b0"/><rect x="12" y="4" width="1" height="1" fill="#b0b0b0"/><rect x="14" y="4" width="1" height="1" fill="#b0b0b0"/><rect x="21" y="13" width="1" height="2" fill="#787878"/><rect x="29" y="11" width="1" height="4" fill="#787878"/><rect x="36" y="13" width="1" height="2" fill="#787878"/><rect x="44" y="9" width="1" height="6" fill="#787878"/><rect x="51" y="13" width="1" height="2" fill="#787878"/><rect x="59" y="11" width="1" height="4" fill="#787878"/><rect x="67" y="13" width="1" height="2" fill="#787878"/><rect x="74" y="11" width="1" height="4" fill="#787878"/><rect x="82" y="13" width="1" height="2" fill="#787878"/><rect x="90" y="0" width="1" height="15" fill="#787878"/><rect x="97" y="13" width="1" height="2" fill="#787878"/><rect x="105" y="11" width="1" height="4" fill="#787878"/><rect x="112" y="13" width="1" height="2" fill="#787878"/><rect x="120" y="11" width="1" height="4" fill="#787878"/><rect x="128" y="13" width="1" height="2" fill="#787878"/><rect x="135" y="9" width="1" height="6" fill="#787878"/><rect x="143" y="13" width="1" height="2" fill="#787878"/><rect x="151" y="11" width="1" height="4" fill="#787878"/><rect x="158" y="13" width="1" height="2" fill="#787878"/><rect x="166" y="11" width="1" height="4" fill="#787878"/><rect x="173" y="13" width="1" height="2" fill="#787878"/><rect x="181" y="0" width="1" height="15" fill="#787878"/><rect x="189" y="13" width="1" height="2" fill="#787878"/><rect x="196" y="11" width="1" height="4" fill="#787878"/><rect x="204" y="13" width="1" height="2" fill="#787878"/><rect x="211" y="11" width="1" height="4" fill="#787878"/><rect x="219" y="13" width="1" height="2" fill="#787878"/><rect x="227" y="9" width="1" height="6" fill="#787878"/><rect x="234" y="13" width="1" height="2" fill="#787878"/><rect x="242" y="11" width="1" height="4" fill="#787878"/><rect x="250" y="13" width="1" height="2" fill="#787878"/><rect x="257" y="11" width="1" height="4" fill="#787878"/><rect x="265" y="13" width="1" height="2" fill="#787878"/><rect x="272" y="0" width="1" height="15" fill="#787878"/><rect x="280" y="13" width="1" height="2" fill="#787878"/><rect x="288" y="11" width="1" height="4" fill="#787878"/><rect x="295" y="13" width="1" height="2" fill="#787878"/><rect x="303" y="11" width="1" height="4" fill="#787878"/><rect x="310" y="13" width="1" height="2" fill="#787878"/><rect x="318" y="9" width="1" height="6" fill="#787878"/><rect x="326" y="13" width="1" height="2" fill="#787878"/><rect x="333" y="11" width="1" height="4" fill="#787878"/><rect x="341" y="13" width="1" height="2" fill="#787878"/><rect x="349" y="11" width="1" height="4" fill="#787878"/><rect x="356" y="13" width="1" height="2" fill="#787878"/><rect x="364" y="0" width="1" height="15" fill="#787878"/><rect x="371" y="13" width="1" height="2" fill="#787878"/><rect x="379" y="11" width="1" height="4" fill="#787878"/><rect x="387" y="13" width="1" height="2" fill="#787878"/><rect x="394" y="11" width="1" height="4" fill="#787878"/><rect x="402" y="13" width="1" height="2" fill="#787878"/><rect x="410" y="9" width="1" height="6" fill="#787878"/><rect x="417" y="13" width="1" height="2" fill="#787878"/><rect x="425" y="11" width="1" height="4" fill="#787878"/><rect x="432" y="13" width="1" height="2" fill="#787878"/><rect x="440" y="11" width="1" height="4" fill="#787878"/><rect x="448" y="13" width="1" height="2" fill="#787878"/><rect x="455" y="0" width="1" height="15" fill="#787878"/><rect x="463" y="13" width="1" height="2" fill="#787878"/><rect x="470" y="11" width="1" height="4" fill="#787878"/><rect x="478" y="13" width="1" height="2" fill="#787878"/><rect x="486" y="11" width="1" height="4" fill="#787878"/><rect x="493" y="13" width="1" height="2" fill="#787878"/><rect x="501" y="9" width="1" height="6" fill="#787878"/><rect x="509" y="13" width="1" height="2" fill="#787878"/><rect x="516" y="11" width="1" height="4" fill="#787878"/><rect x="524" y="13" width="1" height="2" fill="#787878"/><rect x="531" y="11" width="1" height="4" fill="#787878"/><rect x="539" y="13" width="1" height="2" fill="#787878"/><rect x="547" y="0" width="1" height="15" fill="#787878"/><rect x="554" y="13" width="1" height="2" fill="#787878"/><rect x="562" y="11" width="1" height="4" fill="#787878"/><rect x="570" y="13" width="1" height="2" fill="#787878"/><rect x="577" y="11" width="1" height="4" fill="#787878"/><rect x="585" y="13" width="1" height="2" fill="#787878"/><rect x="592" y="9" width="1" height="6" fill="#787878"/><rect x="600" y="13" width="1" height="2" fill="#787878"/><rect x="608" y="11" width="1" height="4" fill="#787878"/><rect x="615" y="13" width="1" height="2" fill="#787878"/><rect x="623" y="11" width="1" height="4" fill="#787878"/><rect x="630" y="13" width="1" height="2" fill="#787878"/><rect x="638" y="0" width="1" height="15" fill="#787878"/><rect x="646" y="13" width="1" height="2" fill="#787878"/><rect x="653" y="11" width="1" height="4" fill="#787878"/><rect x="661" y="13" width="1" height="2" fill="#787878"/><rect x="669" y="11" width="1" height="4" fill="#787878"/><rect x="676" y="13" width="1" height="2" fill="#787878"/><rect x="684" y="9" width="1" height="6" fill="#787878"/><rect x="691" y="13" width="1" height="2" fill="#787878"/><rect x="699" y="11" width="1" height="4" fill="#787878"/><rect x="707" y="13" width="1" height="2" fill="#787878"/><rect x="714" y="11" width="1" height="4" fill="#787878"/><rect x="722" y="13" width="1" height="2" fill="#787878"/><rect x="730" y="0" width="1" height="15" fill="#787878"/><rect x="737" y="13" width="1" height="2" fill="#787878"/><rect x="745" y="11" width="1" height="4" fill="#787878"/><rect x="752" y="13" width="1" height="2" fill="#787878"/><rect x="760" y="11" width="1" height="4" fill="#787878"/><rect x="768" y="13" width="1" height="2" fill="#787878"/><rect x="775" y="9" width="1" height="6" fill="#787878"/><rect x="783" y="13" width="1" height="2" fill="#787878"/><rect x="790" y="11" width="1" height="4" fill="#787878"/><rect x="798" y="13" width="1" height="2" fill="#787878"/><rect x="806" y="11" width="1" height="4" fill="#787878"/><rect x="813" y="13" width="1" height="2" fill="#787878"/><rect x="821" y="0" width="1" height="15" fill="#787878"/><rect x="829" y="13" width="1" height="2" fill="#787878"/><rect x="836" y="11" width="1" height="4" fill="#787878"/><rect x="844" y="13" width="1" height="2" fill="#787878"/><rect x="851" y="11" width="1" height="4" fill="#787878"/><rect x="859" y="13" width="1" height="2" fill="#787878"/><rect x="867" y="9" width="1" height="6" fill="#787878"/><rect x="874" y="13" width="1" height="2" fill="#787878"/><rect x="882" y="11" width="1" height="4" fill="#787878"/><rect x="889" y="13" width="1" height="2" fill="#787878"/><rect x="897" y="11" width="1" height="4" fill="#787878"/><rect x="905" y="13" width="1" height="2" fill="#787878"/><rect x="912" y="0" width="1" height="15" fill="#787878"/><rect x="920" y="13" width="1" height="2" fill="#787878"/><rect x="928" y="11" width="1" height="4" fill="#787878"/><rect x="935" y="13" width="1" height="2" fill="#787878"/><rect x="943" y="11" width="1" height="4" fill="#787878"/><rect x="950" y="13" width="1" height="2" fill="#787878"/><rect x="958" y="9" width="1" height="6" fill="#787878"/><rect x="966" y="13" width="1" height="2" fill="#787878"/><rect x="973" y="11" width="1" height="4" fill="#787878"/><rect x="981" y="13" width="1" height="2" fill="#787878"/><rect x="989" y="11" width="1" height="4" fill="#787878"/><rect x="996" y="13" width="1" height="2" fill="#787878"/><rect x="1004" y="0" width="1" height="15" fill="#787878"/><rect x="1011" y="13" width="1" height="2" fill="#787878"/><rect x="1019" y="11" width="1" height="4" fill="#787878"/><rect x="1027" y="13" width="1" height="2" fill="#787878"/><rect x="1034" y="11" width="1" height="4" fill="#787878"/><rect x="1042" y="13" width="1" height="2" fill="#787878"/><rect x="1049" y="9" width="1" height="6" fill="#787878"/><rect x="1057" y="13" width="1" height="2" fill="#787878"/><rect x="1065" y="11" width="1" height="4" fill="#787878"/><rect x="1072" y="13" width="1" height="2" fill="#787878"/><rect x="1080" y="11" width="1" height="4" fill="#787878"/><rect x="1088" y="13" width="1" height="2" fill="#787878"/><rect x="1095" y="0" width="1" height="15" fill="#787878"/><rect x="1103" y="13" width="1" height="2" fill="#787878"/><rect x="1110" y="11" width="1" height="4" fill="#787878"/><rect x="1118" y="13" width="1" height="2" fill="#787878"/><rect x="1126" y="11" width="1" height="4" fill="#787878"/><rect x="1133" y="13" width="1" height="2" fill="#787878"/><rect x="1141" y="9" width="1" height="6" fill="#787878"/><rect x="1149" y="13" width="1" height="2" fill="#787878"/><rect x="1156" y="11" width="1" height="4" fill="#787878"/><rect x="1164" y="13" width="1" height="2" fill="#787878"/><rect x="1171" y="11" width="1" height="4" fill="#787878"/><rect x="1179" y="13" width="1" height="2" fill="#787878"/><rect x="1187" y="0" width="1" height="15" fill="#787878"/><rect x="1194" y="13" width="1" height="2" fill="#787878"/><rect x="1202" y="11" width="1" height="4" fill="#787878"/><rect x="1209" y="13" width="1" height="2" fill="#787878"/><rect x="1217" y="11" width="1" height="4" fill="#787878"/><rect x="1225" y="13" width="1" height="2" fill="#787878"/><rect x="1232" y="9" width="1" height="6" fill="#787878"/><rect x="1240" y="13" width="1" height="2" fill="#787878"/><rect x="1248" y="11" width="1" height="4" fill="#787878"/><rect x="1255" y="13" width="1" height="2" fill="#787878"/><rect x="1263" y="11" width="1" height="4" fill="#787878"/><rect x="1270" y="13" width="1" height="2" fill="#787878"/><rect x="1278" y="0" width="1" height="15" fill="#787878"/><rect x="1286" y="13" width="1" height="2" fill="#787878"/><text x="93" y="10.3" fill="#f4f4f4" stroke="#f4f4f4" stroke-width="0.35" letter-spacing="0.6" font-size="10.5" font-family="Liberation Sans">12</text><text x="184" y="10.3" fill="#f4f4f4" stroke="#f4f4f4" stroke-width="0.35" letter-spacing="0.6" font-size="10.5" font-family="Liberation Sans">6</text><text x="275" y="10.3" fill="#f4f4f4" stroke="#f4f4f4" stroke-width="0.35" letter-spacing="0.6" font-size="10.5" font-family="Liberation Sans">0</text><text x="367" y="10.3" fill="#f4f4f4" stroke="#f4f4f4" stroke-width="0.35" letter-spacing="0.6" font-size="10.5" font-family="Liberation Sans">6</text><text x="458" y="10.3" fill="#f4f4f4" stroke="#f4f4f4" stroke-width="0.35" letter-spacing="0.6" font-size="10.5" font-family="Liberation Sans">12</text><text x="550" y="10.3" fill="#f4f4f4" stroke="#f4f4f4" stroke-width="0.35" letter-spacing="0.6" font-size="10.5" font-family="Liberation Sans">18</text><text x="641" y="10.3" fill="#f4f4f4" stroke="#f4f4f4" stroke-width="0.35" letter-spacing="0.6" font-size="10.5" font-family="Liberation Sans">24</text><text x="733" y="10.3" fill="#f4f4f4" stroke="#f4f4f4" stroke-width="0.35" letter-spacing="0.6" font-size="10.5" font-family="Liberation Sans">30</text><text x="824" y="10.3" fill="#f4f4f4" stroke="#f4f4f4" stroke-width="0.35" letter-spacing="0.6" font-size="10.5" font-family="Liberation Sans">36</text><text x="915" y="10.3" fill="#f4f4f4" stroke="#f4f4f4" stroke-width="0.35" letter-spacing="0.6" font-size="10.5" font-family="Liberation Sans">42</text><text x="1007" y="10.3" fill="#f4f4f4" stroke="#f4f4f4" stroke-width="0.35" letter-spacing="0.6" font-size="10.5" font-family="Liberation Sans">48</text><text x="1098" y="10.3" fill="#f4f4f4" stroke="#f4f4f4" stroke-width="0.35" letter-spacing="0.6" font-size="10.5" font-family="Liberation Sans">54</text><text x="1190" y="10.3" fill="#f4f4f4" stroke="#f4f4f4" stroke-width="0.35" letter-spacing="0.6" font-size="10.5" font-family="Liberation Sans">60</text><text x="1281" y="10.3" fill="#f4f4f4" stroke="#f4f4f4" stroke-width="0.35" letter-spacing="0.6" font-size="10.5" font-family="Liberation Sans">66</text><rect x="668" y="1" width="1" height="1" fill="#ffffff"/><rect x="668" y="3" width="1" height="1" fill="#ffffff"/><rect x="668" y="5" width="1" height="1" fill="#ffffff"/><rect x="668" y="7" width="1" height="1" fill="#ffffff"/><rect x="668" y="9" width="1" height="1" fill="#ffffff"/><rect x="668" y="11" width="1" height="1" fill="#ffffff"/><rect x="668" y="13" width="1" height="1" fill="#ffffff"/></svg>
<svg class="a" style="left:35px;top:110px;will-change:transform" width="16" height="444"><rect x="0" y="0" width="16" height="444" fill="#1f1f1f"/><rect x="15" y="0" width="1" height="444" fill="#8a8a8a"/><rect x="11" y="4" width="4" height="1" fill="#787878"/><rect x="13" y="11" width="2" height="1" fill="#787878"/><rect x="0" y="19" width="15" height="1" fill="#787878"/><text x="2.3" y="29.8" fill="#f4f4f4" stroke="#f4f4f4" stroke-width="0.35" font-size="10.5" font-family="Liberation Sans">6</text><rect x="13" y="27" width="2" height="1" fill="#787878"/><rect x="11" y="34" width="4" height="1" fill="#787878"/><rect x="13" y="42" width="2" height="1" fill="#787878"/><rect x="11" y="49" width="4" height="1" fill="#787878"/><rect x="13" y="57" width="2" height="1" fill="#787878"/><rect x="9" y="65" width="6" height="1" fill="#787878"/><rect x="13" y="72" width="2" height="1" fill="#787878"/><rect x="11" y="80" width="4" height="1" fill="#787878"/><rect x="13" y="88" width="2" height="1" fill="#787878"/><rect x="11" y="95" width="4" height="1" fill="#787878"/><rect x="13" y="103" width="2" height="1" fill="#787878"/><rect x="0" y="110" width="15" height="1" fill="#787878"/><text x="2.3" y="120.8" fill="#f4f4f4" stroke="#f4f4f4" stroke-width="0.35" font-size="10.5" font-family="Liberation Sans">1</text><text x="2.3" y="130.1" fill="#f4f4f4" stroke="#f4f4f4" stroke-width="0.35" font-size="10.5" font-family="Liberation Sans">2</text><rect x="13" y="118" width="2" height="1" fill="#787878"/><rect x="11" y="126" width="4" height="1" fill="#787878"/><rect x="13" y="133" width="2" height="1" fill="#787878"/><rect x="11" y="141" width="4" height="1" fill="#787878"/><rect x="13" y="149" width="2" height="1" fill="#787878"/><rect x="9" y="156" width="6" height="1" fill="#787878"/><rect x="13" y="164" width="2" height="1" fill="#787878"/><rect x="11" y="171" width="4" height="1" fill="#787878"/><rect x="13" y="179" width="2" height="1" fill="#787878"/><rect x="11" y="187" width="4" height="1" fill="#787878"/><rect x="13" y="194" width="2" height="1" fill="#787878"/><rect x="0" y="202" width="15" height="1" fill="#787878"/><text x="2.3" y="212.8" fill="#f4f4f4" stroke="#f4f4f4" stroke-width="0.35" font-size="10.5" font-family="Liberation Sans">1</text><text x="2.3" y="222.10000000000002" fill="#f4f4f4" stroke="#f4f4f4" stroke-width="0.35" font-size="10.5" font-family="Liberation Sans">8</text><rect x="13" y="209" width="2" height="1" fill="#787878"/><rect x="11" y="217" width="4" height="1" fill="#787878"/><rect x="13" y="225" width="2" height="1" fill="#787878"/><rect x="11" y="232" width="4" height="1" fill="#787878"/><rect x="13" y="240" width="2" height="1" fill="#787878"/><rect x="9" y="248" width="6" height="1" fill="#787878"/><rect x="13" y="255" width="2" height="1" fill="#787878"/><rect x="11" y="263" width="4" height="1" fill="#787878"/><rect x="13" y="270" width="2" height="1" fill="#787878"/><rect x="11" y="278" width="4" height="1" fill="#787878"/><rect x="13" y="286" width="2" height="1" fill="#787878"/><rect x="0" y="293" width="15" height="1" fill="#787878"/><text x="2.3" y="303.8" fill="#f4f4f4" stroke="#f4f4f4" stroke-width="0.35" font-size="10.5" font-family="Liberation Sans">2</text><text x="2.3" y="313.1" fill="#f4f4f4" stroke="#f4f4f4" stroke-width="0.35" font-size="10.5" font-family="Liberation Sans">4</text><rect x="13" y="301" width="2" height="1" fill="#787878"/><rect x="11" y="309" width="4" height="1" fill="#787878"/><rect x="13" y="316" width="2" height="1" fill="#787878"/><rect x="11" y="324" width="4" height="1" fill="#787878"/><rect x="13" y="331" width="2" height="1" fill="#787878"/><rect x="9" y="339" width="6" height="1" fill="#787878"/><rect x="13" y="347" width="2" height="1" fill="#787878"/><rect x="11" y="354" width="4" height="1" fill="#787878"/><rect x="13" y="362" width="2" height="1" fill="#787878"/><rect x="11" y="369" width="4" height="1" fill="#787878"/><rect x="13" y="377" width="2" height="1" fill="#787878"/><rect x="0" y="385" width="15" height="1" fill="#787878"/><text x="2.3" y="395.8" fill="#f4f4f4" stroke="#f4f4f4" stroke-width="0.35" font-size="10.5" font-family="Liberation Sans">3</text><text x="2.3" y="405.1" fill="#f4f4f4" stroke="#f4f4f4" stroke-width="0.35" font-size="10.5" font-family="Liberation Sans">0</text><rect x="13" y="392" width="2" height="1" fill="#787878"/><rect x="11" y="400" width="4" height="1" fill="#787878"/><rect x="13" y="408" width="2" height="1" fill="#787878"/><rect x="11" y="415" width="4" height="1" fill="#787878"/><rect x="13" y="423" width="2" height="1" fill="#787878"/><rect x="9" y="430" width="6" height="1" fill="#787878"/><rect x="13" y="438" width="2" height="1" fill="#787878"/><rect x="1" y="209" width="1" height="1" fill="#ffffff"/><rect x="3" y="209" width="1" height="1" fill="#ffffff"/><rect x="5" y="209" width="1" height="1" fill="#ffffff"/><rect x="7" y="209" width="1" height="1" fill="#ffffff"/><rect x="9" y="209" width="1" height="1" fill="#ffffff"/><rect x="11" y="209" width="1" height="1" fill="#ffffff"/><rect x="13" y="209" width="1" height="1" fill="#ffffff"/></svg>

<!-- vertical scrollbar -->
<div class="a" style="left:1325px;top:93px;width:15px;height:461px;background:#4a4a4a"></div>
<div class="a" style="left:1326px;top:267.5px;width:14px;height:300px;background:#6a6a6a;border-radius:7px"></div>

<!-- right panel -->
<div class="a" style="left:1340px;top:64px;width:3px;height:490px;background:#3a3a3a"></div>
<div class="a" style="left:1343px;top:65px;width:116px;height:11px;background:#434343"></div>
<div class="rsep" style="top:145px"></div>
<div class="rsep" style="top:270px"></div>
<div class="rsep" style="top:423px"></div>
<div class="rsep" style="top:520px"></div>
<div class="ritem" style="top:94px">Layers</div>
<div class="ritem" style="top:122px">Links</div>
<div class="ritem" style="top:163px">Stroke</div>
<div class="ritem" style="top:191px">Swatches</div>
<div class="ritem" style="top:219px">Gradient</div>
<div class="ritem" style="top:247px">CC Libraries</div>
<div class="ritem" style="top:288px">Effects</div>
<div class="ritem" style="top:316px">Text Wrap</div>
<div class="ritem" style="top:344px">Align</div>
<div class="ritem" style="top:372px">Pathfinder</div>
<div class="ritem" style="top:400px">Transform</div>
<div class="ritem" style="top:441px">Table</div>
<div class="ritem" style="top:469px">Table Styles</div>
<div class="ritem" style="top:497px">Cell Styles</div>
<div class="ritem" style="top:538px">Conditional Text</div>
<svg class="a" style="left:1290px;top:64px" width="169" height="490" viewBox="1290 64 169 490">
<defs>
<linearGradient id="pg1" x1="0" x2="1" y1="0" y2="0"><stop offset="0" stop-color="#bcbcbc"/><stop offset="0.6" stop-color="#404040"/><stop offset="1" stop-color="#707070"/></linearGradient>
</defs>
<!-- tab overflow >> -->
<path d="M1324.5 74.6l3.4 3.4l-3.4 3.4M1329.8 74.6l3.4 3.4l-3.4 3.4" fill="none" stroke="#bdbdbd" stroke-width="1.2"/>
<!-- scroll up arrow -->
<path d="M1328.6 103.8l3.6-3.4l3.6 3.4" fill="none" stroke="#9a9a9a" stroke-width="1.1"/>
<!-- grips -->
<g fill="#383838">
<rect x="1410" y="80" width="1" height="4"/><rect x="1412" y="80" width="1" height="4"/><rect x="1414" y="80" width="1" height="4"/><rect x="1416" y="80" width="1" height="4"/><rect x="1418" y="80" width="1" height="4"/><rect x="1420" y="80" width="1" height="4"/><rect x="1422" y="80" width="1" height="4"/><rect x="1424" y="80" width="1" height="4"/><rect x="1426" y="80" width="1" height="4"/><rect x="1428" y="80" width="1" height="4"/>
<rect x="1410" y="149" width="1" height="4"/><rect x="1412" y="149" width="1" height="4"/><rect x="1414" y="149" width="1" height="4"/><rect x="1416" y="149" width="1" height="4"/><rect x="1418" y="149" width="1" height="4"/><rect x="1420" y="149" width="1" height="4"/><rect x="1422" y="149" width="1" height="4"/><rect x="1424" y="149" width="1" height="4"/><rect x="1426" y="149" width="1" height="4"/><rect x="1428" y="149" width="1" height="4"/>
<rect x="1410" y="274" width="1" height="4"/><rect x="1412" y="274" width="1" height="4"/><rect x="1414" y="274" width="1" height="4"/><rect x="1416" y="274" width="1" height="4"/><rect x="1418" y="274" width="1" height="4"/><rect x="1420" y="274" width="1" height="4"/><rect x="1422" y="274" width="1" height="4"/><rect x="1424" y="274" width="1" height="4"/><rect x="1426" y="274" width="1" height="4"/><rect x="1428" y="274" width="1" height="4"/>
<rect x="1410" y="427" width="1" height="4"/><rect x="1412" y="427" width="1" height="4"/><rect x="1414" y="427" width="1" height="4"/><rect x="1416" y="427" width="1" height="4"/><rect x="1418" y="427" width="1" height="4"/><rect x="1420" y="427" width="1" height="4"/><rect x="1422" y="427" width="1" height="4"/><rect x="1424" y="427" width="1" height="4"/><rect x="1426" y="427" width="1" height="4"/><rect x="1428" y="427" width="1" height="4"/>
<rect x="1410" y="524" width="1" height="4"/><rect x="1412" y="524" width="1" height="4"/><rect x="1414" y="524" width="1" height="4"/><rect x="1416" y="524" width="1" height="4"/><rect x="1418" y="524" width="1" height="4"/><rect x="1420" y="524" width="1" height="4"/><rect x="1422" y="524" width="1" height="4"/><rect x="1424" y="524" width="1" height="4"/><rect x="1426" y="524" width="1" height="4"/><rect x="1428" y="524" width="1" height="4"/>
</g>
<!-- layers -->
<path d="M1354.2 104.5l8.3 4.6l8.3-4.6l-2.6-1.5l-5.7 3.2l-5.7-3.2z" fill="#c8c8c8"/>
<path d="M1354 97.5l8.5-5.7l8.5 5.7l-8.5 5.6z" fill="#c8c8c8"/>
<!-- links -->
<g fill="none" stroke="#c8c8c8" stroke-width="1.6">
<rect x="1353.7" y="124.6" width="11" height="7" rx="3.5"/>
<rect x="1360.4" y="124.6" width="11" height="7" rx="3.5"/>
</g>
<!-- stroke -->
<rect x="1354" y="162.6" width="17" height="1.2" fill="#c8c8c8"/>
<rect x="1354" y="167.2" width="17" height="2" fill="#c8c8c8"/>
<rect x="1354" y="172.2" width="17" height="3" fill="#c8c8c8"/>
<!-- swatches -->
<rect x="1354" y="192" width="16" height="11" fill="#c8c8c8"/>
<rect x="1355.2" y="193.2" width="3.8" height="3.9" fill="#8a8a8a"/>
<rect x="1360.2" y="193.2" width="3.8" height="3.9" fill="#c4c4c4"/>
<rect x="1365.2" y="193.2" width="3.8" height="3.9" fill="#5a5a5a"/>
<rect x="1355.2" y="198.1" width="3.8" height="3.9" fill="#5c5c5c"/>
<rect x="1360.2" y="198.1" width="3.8" height="3.9" fill="#7c7c7c"/>
<rect x="1365.2" y="198.1" width="3.8" height="3.9" fill="#a0a0a0"/>
<!-- gradient -->
<rect x="1354.5" y="219.5" width="16" height="10.6" fill="url(#pg1)" stroke="#c8c8c8" stroke-width="1"/>
<!-- cc libraries -->
<rect x="1354.5" y="245.5" width="13" height="13" fill="none" stroke="#c8c8c8" stroke-width="1.1"/>
<rect x="1356.5" y="247.5" width="13" height="13" fill="#535353" stroke="#c8c8c8" stroke-width="1.1"/>
<path d="M1363.1 248v7.2l1.8-1.6l1.8 1.6v-7.2z" fill="#c8c8c8"/>
<!-- fx -->
<text x="1355" y="300" font-family="Liberation Serif" font-style="italic" font-size="17" fill="#a9a9a9">fx</text>
<!-- text wrap -->
<g stroke="#c8c8c8" stroke-width="1.1" fill="none">
<path d="M1354 315.5h17M1354 328.5h17M1354 318.7h3.5M1367.5 318.7h3.5M1354 322h3.5M1367.5 322h3.5M1354 325.3h3.5M1367.5 325.3h3.5"/>
</g>
<ellipse cx="1362.5" cy="322" rx="4.3" ry="4.6" fill="#c8c8c8"/>
<!-- align -->
<rect x="1354.8" y="341.2" width="1.2" height="18.2" fill="#c8c8c8"/>
<rect x="1357" y="344" width="8.5" height="6" fill="#c8c8c8"/>
<rect x="1357" y="352.5" width="13.5" height="6" fill="#c8c8c8"/>
<!-- pathfinder -->
<rect x="1355" y="371" width="9" height="9" fill="#c8c8c8"/>
<rect x="1360.5" y="376.5" width="9" height="9" fill="#c8c8c8" stroke="#535353" stroke-width="1"/>
<rect x="1360.5" y="376.5" width="3.5" height="3.5" fill="#8a8a8a"/>
<!-- transform -->
<rect x="1356.5" y="400.8" width="11.5" height="11.5" fill="none" stroke="#c8c8c8" stroke-width="1" stroke-dasharray="1.5 1.2"/>
<g fill="#c8c8c8"><rect x="1355" y="399.3" width="3.2" height="3.2"/><rect x="1366.3" y="399.3" width="3.2" height="3.2"/><rect x="1355" y="410.5" width="3.2" height="3.2"/><rect x="1366.3" y="410.5" width="3.2" height="3.2"/><rect x="1361.7" y="406" width="1.2" height="1.2"/></g>
<!-- table -->
<g fill="none" stroke="#c8c8c8" stroke-width="1.1">
<rect x="1355.6" y="440.4" width="14.4" height="12"/>
<path d="M1359.5 440.4v12M1355.6 443.6h14.4M1355.6 446.6h14.4M1355.6 449.6h14.4"/>
</g>
<!-- table styles -->
<g fill="none" stroke="#c8c8c8" stroke-width="1.1">
<rect x="1356.6" y="468" width="13.5" height="11.5"/>
<path d="M1356.6 471h13.5M1356.6 474h13.5M1356.6 477h13.5M1360 468v11.5"/>
<rect x="1356.3" y="476.8" width="6.6" height="6.6" fill="#535353"/>
<rect x="1353.9" y="474.5" width="6.6" height="6.6" fill="#535353"/>
</g>
<rect x="1360.5" y="471.5" width="9" height="2" fill="#9a9a9a"/>
<!-- cell styles -->
<g fill="none" stroke="#c8c8c8" stroke-width="1.1">
<rect x="1356.6" y="495.5" width="13.5" height="12"/>
<path d="M1356.6 499h13.5M1360 495.5v12"/>
<rect x="1360.5" y="499.5" width="6" height="5" />
<rect x="1356.3" y="504.8" width="6.6" height="6.6" fill="#535353"/>
<rect x="1353.9" y="502.5" width="6.6" height="6.6" fill="#535353"/>
</g>
<!-- conditional text -->
<path d="M1356 536.3h12.8v3.3h-1.5v-1.6h-3.8v7.9h1.7v1.6h-6v-1.6h1.7v-7.9h-3.8v1.6h-1.5z" fill="#c8c8c8"/>
<path d="M1356 551.5l2-1.7l2 1.7l2-1.7l2 1.7l2-1.7l2 1.7" fill="none" stroke="#c8c8c8" stroke-width="1"/>
</svg>

</body></html>
